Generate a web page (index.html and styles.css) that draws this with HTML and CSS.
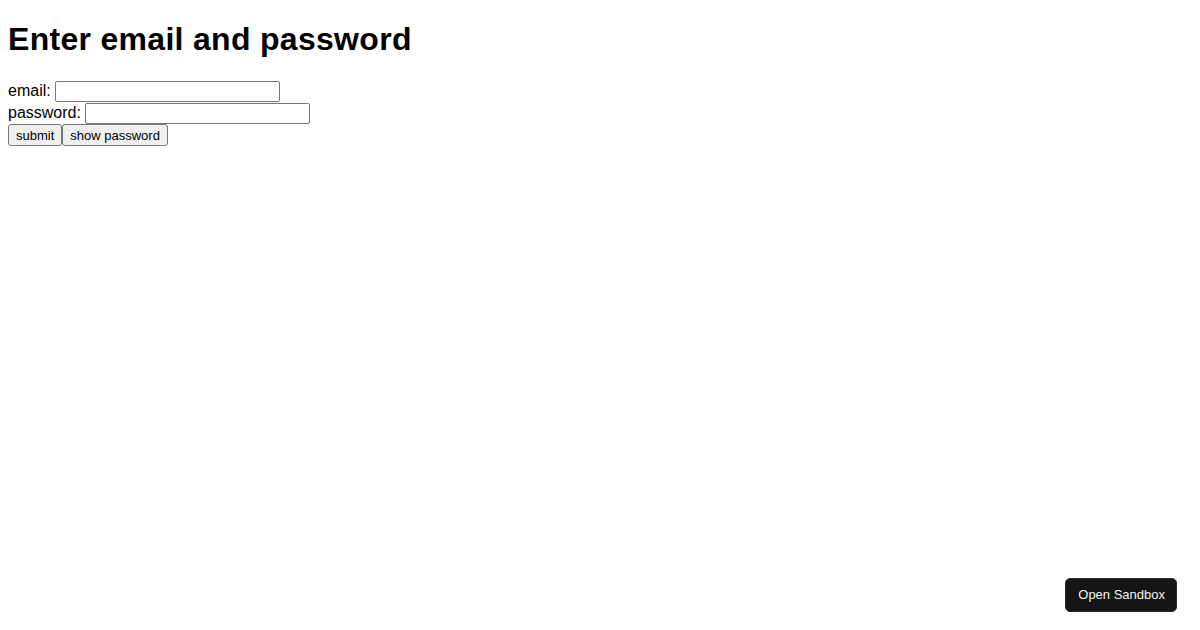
FILE: index.html
```html
<!DOCTYPE html>
<html>
<head>
<meta charset="utf-8">
<link rel="stylesheet" href="styles.css">
</head>
<body>
<h1 class="title">Enter email and password</h1>
<form class="login">
  <div class="row"><label>email: <input type="text" class="field"></label></div>
  <div class="row"><label>password: <input type="password" class="field"></label></div>
  <div class="row"><button type="button" class="btn">submit</button><button type="button" class="btn">show password</button></div>
</form>
<a class="sandbox">Open Sandbox</a>
</body>
</html>
```
FILE: styles.css
```css
html, body {
  margin: 0;
  padding: 0;
}
body {
  padding: 0 8px 8px;
  font-family: "Liberation Sans", Arial, sans-serif;
  font-size: 16px;
  color: #000;
  background: #fff;
}
.title {
  font-size: 32px;
  font-weight: bold;
  letter-spacing: 0.3px;
  margin: 0;
  padding: 21px 0 22px;
  line-height: 37px;
}
.login {
  margin: 0;
}
.row {
  height: 22px;
  line-height: 22px;
}
.field {
  box-sizing: border-box;
  width: 225px;
  height: 21px;
  border: 1px solid #767676;
  border-radius: 2px;
  padding: 1px 2px;
  margin: 0;
  vertical-align: middle;
  background: #fff;
}
.btn {
  box-sizing: border-box;
  height: 22px;
  margin: 0;
  padding: 0 7px;
  font-family: "Liberation Sans", Arial, sans-serif;
  font-size: 13px;
  color: #000;
  background: #efefef;
  border: 1px solid #767676;
  border-radius: 3px;
  vertical-align: top;
}
.sandbox {
  position: fixed;
  right: 23px;
  bottom: 18px;
  box-sizing: border-box;
  height: 34px;
  line-height: 32px;
  padding: 0 11px 0 12px;
  background: #151515;
  color: #f2f2f2;
  font-size: 13px;
  border-radius: 5px;
  border: 1px solid #2c2c2c;
}
```
